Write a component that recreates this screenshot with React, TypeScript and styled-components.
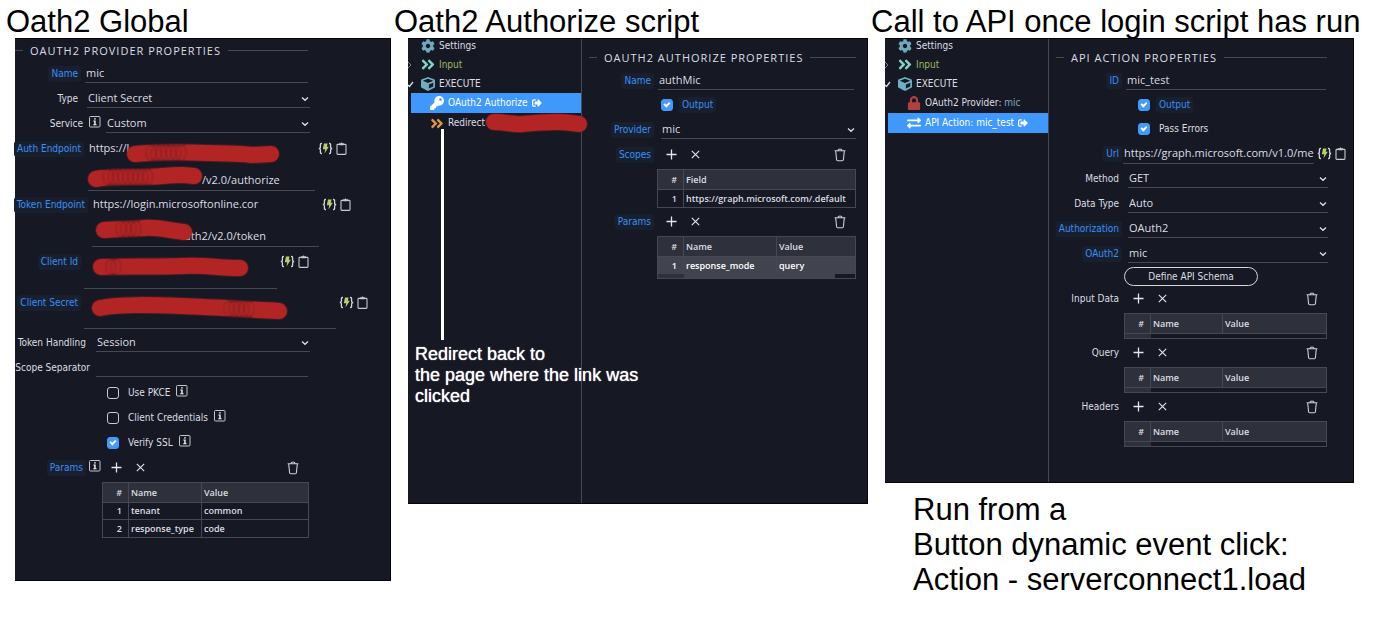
import React from "react";
import styled, { createGlobalStyle, css } from "styled-components";
import {
  FaAngleDoubleRight,
  FaCog,
  FaCube,
  FaExchangeAlt,
  FaKey,
  FaLock,
  FaSignOutAlt,
} from "react-icons/fa";

const color = {
  panel: "#161823",
  line: "#464954",
  text: "#dcdee3",
  blue: "#3c8ef3",
  chip: "#182030",
  select: "#3f99fc",
  head: "#2e303b",
  rowOn: "#41434e",
  red: "#b32424",
};

const ui = `"Open Sans", "Noto Sans", sans-serif`;
const compact = `"DejaVu Sans Condensed", "Open Sans", sans-serif`;

const GlobalStyle = createGlobalStyle`
  *, *::before, *::after { box-sizing: border-box; }
  body { margin: 0; background: #fff; font-family: ${ui}; }
  button, input, select { font: inherit; color: inherit; margin: 0; padding: 0; border: 0; background: none; border-radius: 0; outline: none; }
`;

/* ---------- page ---------- */

const Page = styled.main`
  display: grid;
  grid-template-columns: 385fr 474fr 483fr;
  column-gap: 3px;
  align-items: start;
  padding: 0 26px 0 6px;
`;

const Column = styled.section`
  min-width: 0;
`;

const Title = styled.h2`
  margin: 0;
  height: 38px;
  padding-top: 4px;
  font: 400 31px/36px "Liberation Sans", Arial, sans-serif;
  color: #000;
  white-space: nowrap;
`;

const Panel = styled.div<{ $inset: number; $minHeight: number }>`
  position: relative;
  display: flex;
  margin-left: ${(p) => p.$inset}px;
  min-height: ${(p) => p.$minHeight}px;
  background: ${color.panel};
  border: solid #05060c;
  border-width: 1px 1px 1px 0;
  color: ${color.text};
`;

const Footnote = styled.p`
  margin: 9px 0 0 42px;
  font: 400 31px/35px "Liberation Sans", Arial, sans-serif;
  color: #000;
  white-space: nowrap;
`;

/* ---------- tree ---------- */

const Tree = styled.ul<{ $width: number }>`
  flex: none;
  width: ${(p) => p.$width}px;
  margin: 0;
  padding: 0;
  list-style: none;
  border-right: 1px solid ${color.line};
  overflow: hidden;
  font: 400 10px/14px ${compact};
`;

const TreeRow = styled.li<{ $child?: boolean; $on?: boolean; $first?: boolean }>`
  display: flex;
  align-items: center;
  gap: 4px;
  height: ${(p) => (p.$child ? 20 : 19)}px;
  margin-left: ${(p) => (p.$child ? 3 : 0)}px;
  margin-top: ${(p) => (p.$first ? -3 : 0)}px;
  padding-left: ${(p) => (p.$child ? 19 : 0)}px;
  white-space: nowrap;
  ${(p) => p.$on && css`background: ${color.select}; color: #fff;`}
`;

const TreeIcon = styled.span<{ $color: string }>`
  display: flex;
  justify-content: center;
  width: 14px;
  font-size: 14px;
  color: ${(p) => p.$color};
`;

const TreeText = styled.span<{ $color?: string }>`
  color: ${(p) => p.$color ?? "inherit"};
`;

const Twist = styled.svg`
  flex: none;
  width: 13px;
  height: 12px;
  margin-right: -4px;
  fill: none;
  stroke: ${color.text};
`;

/* ---------- properties form ---------- */

const Form = styled.form`
  flex: 1;
  min-width: 0;
  font-size: 11px;
`;

const Legend = styled.h3<{ $tall?: boolean; $end: number }>`
  display: flex;
  align-items: center;
  gap: 7px;
  height: ${(p) => (p.$tall ? 29 : 22)}px;
  margin: 0;
  padding: ${(p) => (p.$tall ? "8px" : "1px")} ${(p) => p.$end}px 0 ${(p) => (p.$tall ? 7 : 0)}px;
  font-size: 11px;
  font-weight: 400;
  letter-spacing: 1px;
  white-space: nowrap;
  &::before, &::after {
    content: "";
    height: 1px;
    background: ${color.line};
  }
  &::before { width: 8px; }
  &::after { flex: 1; }
`;

const Row = styled.div<{ $height?: number; $end?: number }>`
  display: flex;
  align-items: flex-start;
  height: ${(p) => p.$height ?? 25}px;
  padding-right: ${(p) => p.$end ?? 0}px;
`;

const LabelCell = styled.div<{ $width: number }>`
  flex: none;
  display: flex;
  align-items: center;
  justify-content: flex-end;
  width: ${(p) => p.$width}px;
  height: 25px;
`;

const Label = styled.label<{ $bound?: boolean }>`
  padding: 0 3px;
  font: 400 10px/16px ${compact};
  border-radius: 3px;
  white-space: nowrap;
  ${(p) => p.$bound && css`color: ${color.blue}; background: ${color.chip};`}
`;

const Field = styled.div<{ $gap: number; $height?: number }>`
  position: relative;
  flex: 1;
  min-width: 0;
  height: ${(p) => p.$height ?? 22}px;
  margin-left: ${(p) => p.$gap}px;
  border-bottom: 1px solid ${color.line};
`;

const TextInput = styled.input`
  display: block;
  width: 100%;
  height: 21px;
  padding: 2px 0 0 1px;
`;

const SecondLine = styled.input<{ $indent: number }>`
  display: block;
  width: 100%;
  height: 20px;
  margin-top: 12px;
  padding-left: ${(p) => p.$indent}px;
`;

const Select = styled.select`
  display: block;
  appearance: none;
  width: 100%;
  height: 21px;
  padding: 2px 12px 0 1px;
`;

const Chevron = styled.svg`
  position: absolute;
  right: 1px;
  top: 10px;
  width: 8px;
  height: 6px;
  fill: none;
  stroke: ${color.text};
  stroke-width: 1.4;
  pointer-events: none;
`;

const Tools = styled.div`
  flex: none;
  display: flex;
  gap: 3px;
  align-items: center;
  height: 25px;
  margin-left: 3px;
`;

const IconButton = styled.button<{ $width: number }>`
  flex: none;
  display: flex;
  align-items: center;
  justify-content: center;
  width: ${(p) => p.$width}px;
  height: 25px;
`;

const Toolbar = styled.div<{ $gap: number }>`
  flex: 1;
  display: flex;
  margin-left: ${(p) => p.$gap}px;
  & > :last-child { margin-left: auto; }
`;

const CheckLine = styled.div<{ $start: number; $tight?: boolean }>`
  display: flex;
  align-items: center;
  height: ${(p) => (p.$tight ? 24 : 25)}px;
  padding-left: ${(p) => p.$start}px;
`;

const CheckBox = styled.input`
  position: relative;
  appearance: none;
  flex: none;
  width: 12px;
  height: 12px;
  margin-right: 6px;
  border: 1px solid #c9cbd1;
  border-radius: 3px;
  &:checked { background: #429bfb; border-color: #429bfb; }
  &:checked::after {
    content: "";
    position: absolute;
    left: 2px;
    top: 2px;
    width: 6px;
    height: 4px;
    border: solid #fff;
    border-width: 0 0 2px 2px;
    transform: rotate(-45deg);
  }
`;

const SchemaButton = styled.button`
  display: block;
  width: 134px;
  height: 19px;
  margin: 1px 0 0 75px;
  border: 1px solid #d5d7dc;
  border-radius: 10px;
  font: 400 10px/16px ${compact};
`;

/* ---------- data grid ---------- */

const GridBox = styled.div<{ $start: number; $end: number }>`
  margin: 2px ${(p) => p.$end}px 1px ${(p) => p.$start}px;
  border: 1px solid ${color.line};
`;

const Grid = styled.table`
  width: 100%;
  table-layout: fixed;
  border-collapse: separate;
  border-spacing: 0;
  font-size: 9px;
  line-height: 12px;
  th, td {
    padding: 0 2px;
    text-align: left;
    font-weight: 600;
    white-space: nowrap;
    border-right: 1px solid ${color.line};
    border-bottom: 1px solid ${color.line};
  }
  th { height: 20px; background: ${color.head}; }
  td { height: 17px; }
  th:first-child, td:first-child { padding-right: 6px; text-align: right; }
  th:last-child, td:last-child { border-right: 0; }
  tbody tr:last-child td { border-bottom: 0; }
`;

const GridRow = styled.tr<{ $on?: boolean }>`
  ${(p) => p.$on && css`background: ${color.rowOn}; color: #fff;`}
`;

const Strip = styled.div<{ $on?: boolean }>`
  display: flex;
  height: 4px;
  &::before { content: ""; width: 26px; background: ${color.head}; }
  &::after {
    content: "";
    flex: 1;
    margin-right: 20px;
    background: ${(p) => (p.$on ? color.rowOn : "transparent")};
  }
`;

/* ---------- annotation over the middle panel ---------- */

const Pointer = styled.div`
  position: absolute;
  left: 33px;
  top: 90px;
  width: 3px;
  height: 211px;
  background: #fff;
`;

const Note = styled.p`
  position: absolute;
  left: 7px;
  top: 305px;
  margin: 0;
  font: 400 18px/21px "Liberation Sans", Arial, sans-serif;
  color: #fff;
  text-shadow: 0 0 1px #fff;
  white-space: nowrap;
`;

/* ---------- drawings ---------- */

const Mark = styled.svg<{ $x: number; $y: number }>`
  position: absolute;
  left: ${(p) => p.$x}px;
  top: ${(p) => p.$y}px;
  overflow: visible;
  pointer-events: none;
`;

type ScribbleProps = {
  x: number;
  y: number;
  w: number;
  h: number;
  d: string;
  rings?: [number, number, number][];
};

function Scribble({ x, y, w, h, d, rings = [] }: ScribbleProps) {
  const line = { d, fill: "none", strokeLinecap: "round", strokeLinejoin: "round" } as const;
  return (
    <Mark $x={x} $y={y} width={w} height={h} viewBox={`0 0 ${w} ${h}`} aria-hidden="true">
      <path {...line} stroke="#7d2023" strokeWidth="18" opacity="0.45" />
      <path {...line} stroke={color.red} strokeWidth="16" />
      {rings.map(([from, to, cy]) => {
        const items = [];
        for (let cx = from; cx <= to; cx += 5) {
          items.push(
            <ellipse key={cx} cx={cx} cy={cy} rx="5" ry="8" fill="none" stroke="#5c1a20" strokeWidth="2.4" opacity="0.16" />
          );
        }
        return (
          <g key={from}>
            <path d={`M${from} ${cy - 8}H${to}M${from} ${cy + 8}H${to}`} stroke="#3d1821" strokeWidth="2.5" opacity="0.3" strokeLinecap="round" />
            {items}
          </g>
        );
      })}
    </Mark>
  );
}

const InfoIcon = styled(InfoSvg)`
  flex: none;
  margin: 0 0 3px 3px;
`;

function InfoSvg({ className }: { className?: string }) {
  return (
    <svg className={className} width="12" height="12" viewBox="0 0 12 12" role="img" aria-label="Info">
      <rect x="0.5" y="0.5" width="10.5" height="10.5" rx="1" fill="none" stroke="#c3c5cb" />
      <path d="M5.1 2.2h1.7v1.4H5.1zM4.3 4.5h2.4v3.7h.9v1H4.2v-1h1V5.5h-.9z" fill="#eceef2" />
    </svg>
  );
}

function BindIcon() {
  return (
    <svg width="15" height="13" viewBox="0 0 15 13">
      <g fill="none" stroke="#d3d5da" strokeWidth="1.3">
        <path d="M4 1.5H3.4Q2.4 1.5 2.4 2.6V5Q2.4 6.5.8 6.5 2.4 6.5 2.4 8v2.4q0 1.1 1 1.1H4" />
        <path d="M11 1.5h.6q1 0 1 1.1V5q0 1.5 1.6 1.5-1.6 0-1.6 1.5v2.4q0 1.1-1 1.1H11" />
      </g>
      <path d="M6 1.4h3.6L8.8 4.8h2L6.5 11.6 7.2 7.2H4.8z" fill="#b5cf6a" />
    </svg>
  );
}

function ClipboardIcon() {
  return (
    <svg width="11" height="13" viewBox="0 0 11 13" fill="none" stroke="#c9cbd1" strokeWidth="1.1">
      <rect x="1" y="2.4" width="9" height="10" rx="0.8" />
      <path d="M3.3 2.2V1.4h1.2Q5.5-.1 6.5 1.4h1.2v1.6H3.3z" fill="#c9cbd1" strokeWidth="0.5" />
    </svg>
  );
}

function PlusIcon() {
  return (
    <svg width="11" height="11" viewBox="0 0 11 11" stroke="#e6e7eb" strokeWidth="1.3">
      <path d="M5.5 .5v10M.5 5.5h10" />
    </svg>
  );
}

function CrossIcon() {
  return (
    <svg width="9" height="9" viewBox="0 0 9 9" stroke="#e6e7eb" strokeWidth="1.1">
      <path d="M.8.8l7.4 7.4M8.2.8L.8 8.2" />
    </svg>
  );
}

function TrashIcon() {
  return (
    <svg width="12" height="14" viewBox="0 0 12 14" fill="none" stroke="#cfd1d6" strokeWidth="1.1">
      <path d="M.6 2.7h10.8M4 2.4Q4 1 6 1t2 1.4M1.7 3l.9 8.8q.1 1 1 1h4.8q.9 0 1-1L10.3 3" />
    </svg>
  );
}

/* ---------- composed parts ---------- */

function Bindings() {
  return (
    <Tools>
      <IconButton type="button" $width={15} aria-label="Data bindings"><BindIcon /></IconButton>
      <IconButton type="button" $width={11} aria-label="Paste"><ClipboardIcon /></IconButton>
    </Tools>
  );
}

type RowProps = {
  id: string;
  label: string;
  value?: string;
  bound?: boolean;
  info?: boolean;
  labelWidth: number;
  gap: number;
  end: number;
  bind?: boolean;
};

function TextRow({ id, label, value = "", bound, labelWidth, gap, end, bind }: RowProps) {
  return (
    <Row $end={end}>
      <LabelCell $width={labelWidth}><Label htmlFor={id} $bound={bound}>{label}</Label></LabelCell>
      <Field $gap={gap} $height={bind ? 23 : 22}><TextInput id={id} defaultValue={value} /></Field>
      {bind && <Bindings />}
    </Row>
  );
}

function SelectRow({ id, label, value, bound, info, labelWidth, gap, end }: RowProps) {
  return (
    <Row $end={end}>
      <LabelCell $width={labelWidth}>
        <Label htmlFor={id} $bound={bound}>{label}</Label>
        {info && <InfoIcon />}
      </LabelCell>
      <Field $gap={gap}>
        <Select id={id} defaultValue={value}><option>{value}</option></Select>
        <Chevron viewBox="0 0 8 6"><path d="M1 1.5l3 2.7 3-2.7" /></Chevron>
      </Field>
    </Row>
  );
}

type CheckProps = {
  id: string;
  label: string;
  start: number;
  checked?: boolean;
  bound?: boolean;
  info?: boolean;
  tight?: boolean;
};

function CheckRow({ id, label, start, checked, bound, info, tight }: CheckProps) {
  return (
    <CheckLine $start={start} $tight={tight}>
      <CheckBox id={id} type="checkbox" defaultChecked={checked} />
      <Label htmlFor={id} $bound={bound}>{label}</Label>
      {info && <InfoIcon />}
    </CheckLine>
  );
}

type GridRowsProps = {
  label: string;
  bound?: boolean;
  info?: boolean;
  labelWidth: number;
  gap: number;
  end: number;
  start: number;
  gridEnd: number;
  heads: string[];
  nameWidth?: number;
  rows?: string[][];
  on?: boolean;
  strip?: boolean;
};

function GridSection(p: GridRowsProps) {
  return (
    <>
      <Row $end={p.end}>
        <LabelCell $width={p.labelWidth}>
          <Label as="span" $bound={p.bound}>{p.label}</Label>
          {p.info && <InfoIcon />}
        </LabelCell>
        <Toolbar $gap={p.gap}>
          <IconButton type="button" $width={24} aria-label={`Add to ${p.label}`}><PlusIcon /></IconButton>
          <IconButton type="button" $width={24} aria-label={`Remove from ${p.label}`}><CrossIcon /></IconButton>
          <IconButton type="button" $width={24} aria-label={`Clear ${p.label}`}><TrashIcon /></IconButton>
        </Toolbar>
      </Row>
      <GridBox $start={p.start} $end={p.gridEnd}>
        <Grid aria-label={p.label}>
          <colgroup>
            <col width="26" />
            {p.nameWidth && <col width={p.nameWidth} />}
            <col />
          </colgroup>
          <thead>
            <tr>{p.heads.map((h) => <th key={h} scope="col">{h}</th>)}</tr>
          </thead>
          {p.rows && (
            <tbody>
              {p.rows.map((r) => (
                <GridRow key={r[0]} $on={p.on}>{r.map((c) => <td key={c}>{c}</td>)}</GridRow>
              ))}
            </tbody>
          )}
        </Grid>
        {p.strip && <Strip $on={p.on} />}
      </GridBox>
    </>
  );
}

function TreeTop() {
  return (
    <>
      <TreeRow $first>
        <Twist />
        <TreeIcon $color="#6fa9bf"><FaCog /></TreeIcon>
        <TreeText>Settings</TreeText>
      </TreeRow>
      <TreeRow>
        <Twist viewBox="0 0 13 12"><path d="M0 3l3 3-3 3" opacity="0.5" /></Twist>
        <TreeIcon $color="#86cfc4"><FaAngleDoubleRight size={17} /></TreeIcon>
        <TreeText $color="#9bbb62">Input</TreeText>
      </TreeRow>
      <TreeRow>
        <Twist viewBox="0 0 13 12"><path d="M0 7l1.5 1.5L5 4" strokeWidth="1.3" /></Twist>
        <TreeIcon $color="#6fafc4"><FaCube /></TreeIcon>
        <TreeText>EXECUTE</TreeText>
      </TreeRow>
    </>
  );
}

/* ---------- panels ---------- */

function ProviderPanel() {
  return (
    <Panel $inset={9} $minHeight={543}>
      <Form>
        <Legend $end={82}>OAUTH2 PROVIDER PROPERTIES</Legend>
        <TextRow id="p-name" label="Name" value="mic" bound labelWidth={66} gap={4} end={82} />
        <SelectRow id="p-type" label="Type" value="Client Secret" labelWidth={66} gap={6} end={80} />
        <SelectRow id="p-service" label="Service" value="Custom" info labelWidth={86} gap={5} end={80} />
        <Row $height={56} $end={43}>
          <LabelCell $width={69}><Label htmlFor="p-auth" $bound>Auth Endpoint</Label></LabelCell>
          <Field $gap={4} $height={55}>
            <TextInput id="p-auth" defaultValue="https://l" />
            <SecondLine aria-label="Auth Endpoint, second line" $indent={114} defaultValue="/v2.0/authorize" />
            <Scribble x={39} y={7} w={153} h={20} d="M8 11C30 9 55 9 80 10S110 10 124 12C132 12 138 11 144 11" rings={[[24, 58, 10]]} />
            <Scribble x={0} y={30} w={115} h={22} d="M8 13C25 10 50 12 75 10S95 9 106 10" rings={[[20, 62, 11]]} />
          </Field>
          <Bindings />
        </Row>
        <Row $height={57} $end={39}>
          <LabelCell $width={73}><Label htmlFor="p-token" $bound>Token Endpoint</Label></LabelCell>
          <Field $gap={4} $height={55}>
            <TextInput id="p-token" defaultValue="https://login.microsoftonline.cor" />
            <SecondLine aria-label="Token Endpoint, second line" $indent={92} defaultValue="uth2/v2.0/token" />
            <Scribble x={3} y={26} w={98} h={22} d="M9 12C22 11 38 11 50 10S72 12 89 14" rings={[[26, 44, 11]]} />
          </Field>
          <Bindings />
        </Row>
        <Row $height={41} $end={81}>
          <LabelCell $width={66}><Label htmlFor="p-client" $bound>Client Id</Label></LabelCell>
          <Field $gap={3} $height={40}>
            <TextInput id="p-client" />
            <Scribble x={8} y={9} w={157} h={18} d="M9 9C40 8 60 9 90 8S125 10 148 10" rings={[[19, 24, 9]]} />
          </Field>
          <Bindings />
        </Row>
        <Row $height={40} $end={22}>
          <LabelCell $width={66}><Label htmlFor="p-secret" $bound>Client Secret</Label></LabelCell>
          <Field $gap={3} $height={39}>
            <TextInput id="p-secret" />
            <Scribble x={7} y={6} w={197} h={24} d="M9 12C30 8 60 9 90 10S150 13 188 15" rings={[[138, 160, 13]]} />
          </Field>
          <Bindings />
        </Row>
        <SelectRow id="p-handling" label="Token Handling" value="Session" labelWidth={74} gap={7} end={80} />
        <TextRow id="p-sep" label="Scope Separator" labelWidth={78} gap={3} end={82} />
        <CheckRow id="p-pkce" label="Use PKCE" start={92} info />
        <CheckRow id="p-cred" label="Client Credentials" start={92} info />
        <CheckRow id="p-ssl" label="Verify SSL" start={92} checked info />
        <GridSection
          label="Params" bound info labelWidth={86} gap={3} end={85} start={87} gridEnd={81}
          heads={["#", "Name", "Value"]} nameWidth={73}
          rows={[["1", "tenant", "common"], ["2", "response_type", "code"]]}
        />
      </Form>
    </Panel>
  );
}

function AuthorizePanel() {
  return (
    <Panel $inset={14} $minHeight={466}>
      <Tree $width={174}>
        <TreeTop />
        <TreeRow $child $on>
          <TreeIcon $color="#fff"><FaKey /></TreeIcon>
          <TreeText>OAuth2 Authorize</TreeText>
          <FaSignOutAlt size={10} />
        </TreeRow>
        <TreeRow $child>
          <TreeIcon $color="#e2954a"><FaAngleDoubleRight size={15} /></TreeIcon>
          <TreeText>Redirect</TreeText>
        </TreeRow>
      </Tree>
      <Scribble x={77} y={74} w={103} h={20} d="M9 9C22 9 28 12 38 11S62 9 72 9 85 10 94 11" />
      <Form>
        <Legend $tall $end={11}>OAUTH2 AUTHORIZE PROPERTIES</Legend>
        <TextRow id="a-name" label="Name" value="authMic" bound labelWidth={72} gap={4} end={13} />
        <CheckRow id="a-output" label="Output" start={79} checked bound tight />
        <SelectRow id="a-provider" label="Provider" value="mic" bound labelWidth={72} gap={7} end={11} />
        <GridSection
          label="Scopes" bound labelWidth={72} gap={5} end={15} start={75} gridEnd={11}
          heads={["#", "Field"]} rows={[["1", "https://graph.microsoft.com/.default"]]}
        />
        <GridSection
          label="Params" bound labelWidth={72} gap={5} end={15} start={75} gridEnd={11}
          heads={["#", "Name", "Value"]} nameWidth={93}
          rows={[["1", "response_mode", "query"]]} on strip
        />
      </Form>
      <Pointer />
      <Note>
        Redirect back to<br />
        the page where the link was<br />
        clicked
      </Note>
    </Panel>
  );
}

function ApiPanel() {
  const col = { labelWidth: 73, gap: 6, end: 25 };
  const grid = { labelWidth: 73, gap: 4, end: 29, start: 75, gridEnd: 26, heads: ["#", "Name", "Value"], nameWidth: 72, strip: true };
  return (
    <Panel $inset={14} $minHeight={445}>
      <Tree $width={164}>
        <TreeTop />
        <TreeRow $child>
          <TreeIcon $color="#b0413e"><FaLock /></TreeIcon>
          <TreeText>OAuth2 Provider: <TreeText $color="#7fa9c9">mic</TreeText></TreeText>
        </TreeRow>
        <TreeRow $child $on>
          <TreeIcon $color="#fff"><FaExchangeAlt /></TreeIcon>
          <TreeText>API Action: mic_test</TreeText>
          <FaSignOutAlt size={10} />
        </TreeRow>
      </Tree>
      <Form>
        <Legend $tall $end={26}>API ACTION PROPERTIES</Legend>
        <TextRow id="c-id" label="ID" value="mic_test" bound labelWidth={73} gap={4} end={27} />
        <CheckRow id="c-output" label="Output" start={89} checked bound tight />
        <CheckRow id="c-errors" label="Pass Errors" start={89} checked tight />
        <TextRow id="c-url" label="Url" value="https://graph.microsoft.com/v1.0/me" bound bind labelWidth={73} gap={1} end={7} />
        <SelectRow id="c-method" label="Method" value="GET" {...col} />
        <SelectRow id="c-type" label="Data Type" value="Auto" {...col} />
        <SelectRow id="c-auth" label="Authorization" value="OAuth2" bound {...col} />
        <SelectRow id="c-oauth" label="OAuth2" value="mic" bound {...col} />
        <SchemaButton type="button">Define API Schema</SchemaButton>
        <GridSection label="Input Data" {...grid} />
        <GridSection label="Query" {...grid} />
        <GridSection label="Headers" {...grid} />
      </Form>
    </Panel>
  );
}

export default function App() {
  return (
    <>
      <GlobalStyle />
      <Page>
        <Column>
          <Title>Oath2 Global</Title>
          <ProviderPanel />
        </Column>
        <Column>
          <Title>Oath2 Authorize script</Title>
          <AuthorizePanel />
        </Column>
        <Column>
          <Title>Call to API once login script has run</Title>
          <ApiPanel />
          <Footnote>
            Run from a<br />
            Button dynamic event click:<br />
            Action - serverconnect1.load
          </Footnote>
        </Column>
      </Page>
    </>
  );
}
